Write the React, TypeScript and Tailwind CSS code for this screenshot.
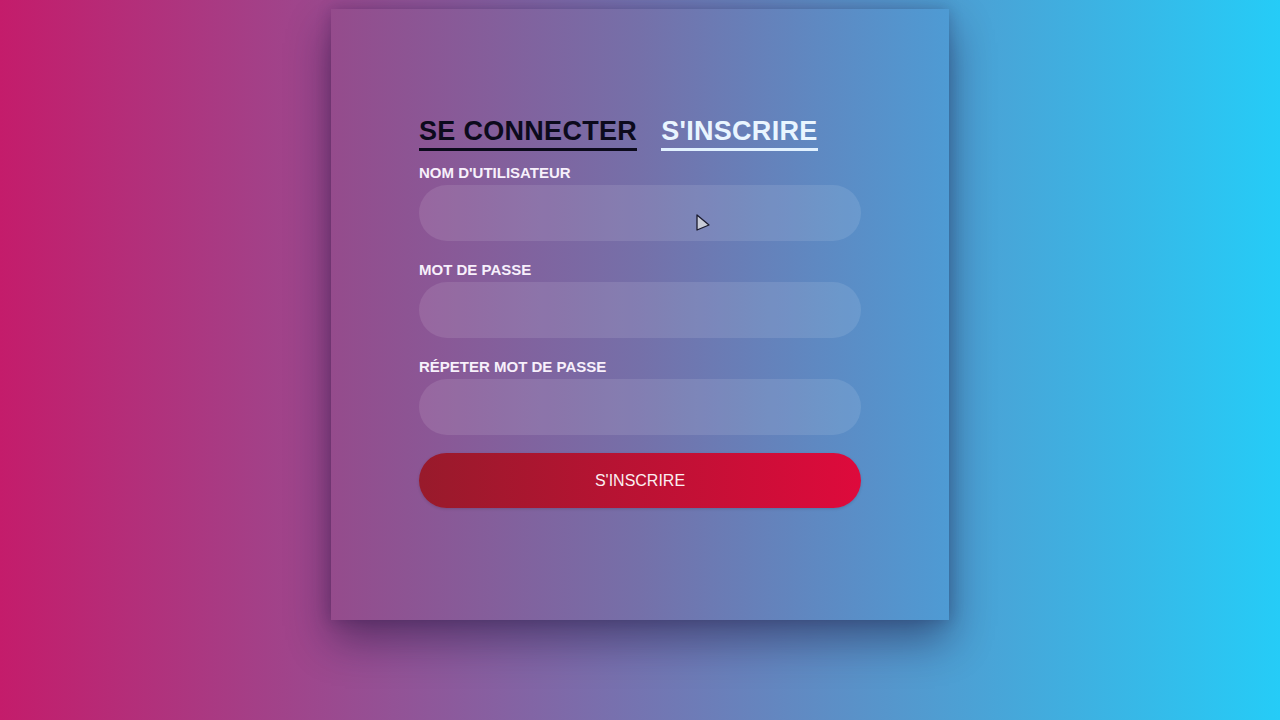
import React, { useState } from 'react';

const fields = [
  { id: 'username', label: "NOM D'UTILISATEUR", type: 'text' },
  { id: 'password', label: 'MOT DE PASSE', type: 'password' },
  { id: 'repeat', label: 'RÉPETER MOT DE PASSE', type: 'password' },
];

export default function App() {
  const [tab, setTab] = useState<'login' | 'signup'>('signup');

  return (
    <div
      className="relative min-h-screen h-[720px] overflow-hidden bg-[linear-gradient(to_right,#c41c6b,#25ccf7)] pt-[9px]"
      style={{ fontFamily: '"Liberation Sans", Arial, sans-serif' }}
    >
      {/* Card */}
      <div className="mx-auto w-[618px] h-[611px] bg-[linear-gradient(to_right,#954b8c,#7570a9,#4e9bd4)] shadow-[0_20px_40px_rgba(20,10,50,0.45),0_0_14px_rgba(20,10,50,0.2)] px-[88px] pt-[109px]">
        <div className="flex gap-[24px]">
          <button
            onClick={() => setTab('login')}
            className="text-[27px] leading-[27px] font-bold tracking-[0.3px] text-[#0c0a1c] pb-[3px] border-b-[3px] border-[#0c0a1c]"
          >
            SE CONNECTER
          </button>
          <button
            onClick={() => setTab('signup')}
            className="text-[27px] leading-[27px] font-bold tracking-[0.3px] text-[#e9f5ff] pb-[3px] border-b-[3px] border-[#e1f1ff]"
          >
            S'INSCRIRE
          </button>
        </div>

        <form className="mt-[14px]" onSubmit={(e) => e.preventDefault()}>
          {fields.map((f) => (
            <div key={f.id} className="mb-[21px]">
              <label
                htmlFor={f.id}
                className="block text-[15px] leading-[15px] font-bold text-[#f7f0fb] mb-[5px]"
              >
                {f.label}
              </label>
              <input
                id={f.id}
                type={f.type}
                className="w-full h-[56px] rounded-full bg-white/10 px-6 text-white outline-none"
              />
            </div>
          ))}
          <button
            type="submit"
            className="-mt-[3px] w-full h-[55px] rounded-full bg-[linear-gradient(to_right,#981a2b,#de0a3c)] text-[16px] leading-[55px] text-[#fbeef0] shadow-[0_1px_3px_rgba(0,0,0,0.15)]"
          >
            {tab === 'signup' ? "S'INSCRIRE" : 'SE CONNECTER'}
          </button>
        </form>
      </div>

      {/* mouse cursor from the capture */}
      <svg
        className="absolute left-[696px] top-[214px]"
        width="15"
        height="18"
        viewBox="0 0 15 18"
      >
        <path d="M1 1 L1 16 L13 11 Z" fill="#c9ccd8" stroke="#1a1a2e" strokeWidth="1.3" strokeLinejoin="round" />
      </svg>
    </div>
  );
}
